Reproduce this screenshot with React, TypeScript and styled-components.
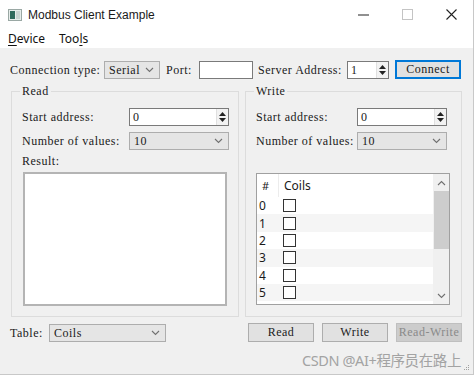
import styled, { createGlobalStyle } from 'styled-components';

const GlobalStyle = createGlobalStyle`
	html, body {
		margin: 0;
		padding: 0;
		background: #f0f0f0;
	}
	* {
		box-sizing: border-box;
	}
`

const ui = '"Noto Sans", "Liberation Sans", sans-serif';
const simsun = '"Liberation Serif", "Noto Sans CJK SC", serif';

const Window = styled.div`
	width: 474px;
	height: 375px;
	position: relative;
	overflow: hidden;
	background: #f0f0f0;
	display: flex;
	flex-direction: column;
	border-right: 1px solid #c8c8c8;
	border-bottom: 1px solid #c8c8c8;
`

const TitleBar = styled.div`
	height: 29px;
	background: #fff;
	display: flex;
	align-items: center;
	padding-left: 8px;
	font-family: "Liberation Sans", sans-serif;
	font-size: 12px;
	color: #1a1a1a;
`

const Title = styled.span`
	margin-left: 6px;
	flex: 1;
`

const Caption = styled.div`
	width: 44px;
	height: 29px;
	display: flex;
	align-items: center;
	justify-content: center;
`

const MenuBar = styled.div`
	height: 19px;
	background: #fff;
	display: flex;
	align-items: center;
	gap: 14px;
	padding-left: 8px;
	font-family: ${ui};
	font-size: 12px;
	color: #111;
`

const MenuItem = styled.span`
	u {
		text-underline-offset: 2px;
	}
`

const Body = styled.div`
	flex: 1;
	display: flex;
	flex-direction: column;
	padding: 12px 11px 0 10px;
	font-family: ${simsun};
	font-size: 12px;
	letter-spacing: 0.5px;
	color: #1a1a1a;
`

const Row = styled.div<{ $gap?: number }>`
	display: flex;
	align-items: center;
	height: 19px;
	gap: ${p => p.$gap ?? 5}px;
`

const Label = styled.span<{ $w?: number }>`
	white-space: nowrap;
	line-height: 14px;
	width: ${p => (p.$w ? `${p.$w}px` : 'auto')};
	flex-shrink: 0;
`

const Input = styled.div<{ $w: number }>`
	width: ${p => p.$w}px;
	height: 18px;
	background: #fff;
	border: 1px solid #7a7a7a;
	display: flex;
	align-items: center;
	padding-left: 3px;
	line-height: 14px;
`

const SpinBox = styled(Input)`
	justify-content: space-between;
`

const SpinButtons = styled.div`
	width: 12px;
	height: 100%;
	display: flex;
	flex-direction: column;
	justify-content: center;
	align-items: center;
	gap: 2px;
	background: #f2f2f2;
	border-left: 1px solid #e0e0e0;
`

const Combo = styled.div<{ $w: number }>`
	width: ${p => p.$w}px;
	height: 18px;
	background: #e5e5e5;
	border: 1px solid #adadad;
	display: flex;
	align-items: center;
	justify-content: space-between;
	padding: 0 5px 0 4px;
	line-height: 14px;
`

const Button = styled.div<{ $focus?: boolean; $disabled?: boolean }>`
	width: 66px;
	height: 19px;
	display: flex;
	align-items: center;
	justify-content: center;
	background: ${p => (p.$disabled ? '#cccccc' : '#e1e1e1')};
	border: 1px solid ${p => (p.$focus ? '#0078d7' : p.$disabled ? '#bfbfbf' : '#adadad')};
	box-shadow: ${p => (p.$focus ? 'inset 0 0 0 1px #0078d7' : 'none')};
	color: ${p => (p.$disabled ? '#8a8a8a' : '#1a1a1a')};
`

const Groups = styled.div`
	display: flex;
	gap: 6px;
	margin-top: 12px;
	padding-left: 1px;
`

const GroupBox = styled.div<{ $w: number }>`
	position: relative;
	width: ${p => p.$w}px;
	height: 226px;
	border: 1px solid #dcdcdc;
	padding: 16px 11px 0 10px;
	display: flex;
	flex-direction: column;
`

const GroupTitle = styled.span`
	position: absolute;
	top: -8px;
	left: 8px;
	padding: 0 2px;
	background: #f0f0f0;
	line-height: 14px;
`

const FormGrid = styled.div<{ $label: number }>`
	display: grid;
	grid-template-columns: ${p => p.$label}px 1fr;
	row-gap: 6px;
	align-items: center;
`

const ResultLabel = styled.div`
	margin-top: 4px;
	height: 14px;
	line-height: 14px;
`

const ResultBox = styled.div`
	margin-top: 4px;
	margin-left: 1px;
	height: 134px;
	background: #fff;
	border: 2px solid #b4b4b4;
`

const Table = styled.div`
	margin-top: 23px;
	height: 132px;
	border: 1px solid #a0a0a0;
	background: #fff;
	display: flex;
	overflow: hidden;
	font-family: ${ui};
	letter-spacing: 0;
	font-size: 12px;
	color: #1a1a1a;
`

const TableBody = styled.div`
	flex: 1;
	display: flex;
	flex-direction: column;
`

const HeaderRow = styled.div`
	height: 23px;
	flex-shrink: 0;
	display: grid;
	grid-template-columns: 22px 1fr;
	align-items: center;
`

const HeaderCell = styled.div<{ $sep?: boolean }>`
	padding-left: 5px;
	height: 100%;
	display: flex;
	align-items: center;
	border-right: ${p => (p.$sep ? '1px solid #ececec' : 'none')};
	font-size: ${p => (p.$sep ? 11 : 12)}px;
`

const DataRow = styled.div<{ $alt: boolean }>`
	height: 17.4px;
	flex-shrink: 0;
	display: grid;
	grid-template-columns: 22px 1fr;
	align-items: center;
	background: ${p => (p.$alt ? '#f5f5f5' : '#fff')};
`

const IndexCell = styled.div`
	padding-left: 2px;
	font-size: 12px;
`

const CheckBox = styled.div`
	width: 13px;
	height: 13px;
	margin-left: 4px;
	border: 1px solid #333;
	background: #fff;
`

const ScrollBar = styled.div`
	width: 16px;
	background: #f0f0f0;
	display: flex;
	flex-direction: column;
	align-items: center;
`

const ScrollArrow = styled.div`
	height: 17px;
	display: flex;
	align-items: center;
	justify-content: center;
`

const Thumb = styled.div`
	width: 15px;
	height: 58px;
	background: #cdcdcd;
`

const Spacer = styled.div`
	flex: 1;
`

const BottomRow = styled(Row)`
	margin-top: 6px;
`

const Watermark = styled.div`
	position: absolute;
	right: 12px;
	bottom: 4px;
	font-family: "Noto Sans", "Noto Sans CJK SC", sans-serif;
	font-size: 14.5px;
	color: #a3a3a3;
	letter-spacing: -0.4px;
`

const Grip = styled.svg`
	position: absolute;
	right: 3px;
	bottom: 3px;
`

function Chevron({ up }: { up?: boolean }) {
	return (
		<svg width="9" height="6" viewBox="0 0 9 6">
			<path
				d={up ? 'M1 5 L4.5 1.5 L8 5' : 'M1 1 L4.5 4.5 L8 1'}
				fill="none"
				stroke="#707070"
				strokeWidth="1.1"
			/>
		</svg>
	);
}

function SpinArrows() {
	return (
		<SpinButtons>
			<svg width="7" height="4" viewBox="0 0 7 4">
				<path d="M0 4 L3.5 0 L7 4 Z" fill="#222" />
			</svg>
			<svg width="7" height="4" viewBox="0 0 7 4">
				<path d="M0 0 L3.5 4 L7 0 Z" fill="#222" />
			</svg>
		</SpinButtons>
	);
}

function AppIcon() {
	return (
		<svg width="14" height="12" viewBox="0 0 14 12">
			<rect x="0.5" y="0.5" width="13" height="11" fill="#e6ecea" stroke="#9aa8a4" />
			<rect x="2" y="2" width="5" height="8" fill="#2f6a5c" />
			<rect x="8" y="2" width="4" height="8" fill="#c9d4d1" />
		</svg>
	);
}

const rows = [0, 1, 2, 3, 4, 5, 6];

export default function App() {
	return (
		<Window>
			<GlobalStyle />
			<TitleBar>
				<AppIcon />
				<Title>Modbus Client Example</Title>
				<Caption>
					<svg width="11" height="2" viewBox="0 0 11 2">
						<rect width="11" height="1" y="0.5" fill="#222" />
					</svg>
				</Caption>
				<Caption>
					<svg width="11" height="11" viewBox="0 0 11 11">
						<rect x="0.5" y="0.5" width="10" height="10" fill="none" stroke="#c4c4c4" />
					</svg>
				</Caption>
				<Caption>
					<svg width="11" height="11" viewBox="0 0 11 11">
						<path d="M0.5 0.5 L10.5 10.5 M10.5 0.5 L0.5 10.5" stroke="#222" strokeWidth="1.1" />
					</svg>
				</Caption>
			</TitleBar>
			<MenuBar>
				<MenuItem><u>D</u>evice</MenuItem>
				<MenuItem>Too<u>l</u>s</MenuItem>
			</MenuBar>
			<Body>
				<Row $gap={0}>
					<Label $w={94}>Connection type:</Label>
					<Combo $w={56}>
						<span>Serial</span>
						<Chevron />
					</Combo>
					<Label $w={39} style={{ paddingLeft: 6 }}>Port:</Label>
					<Input $w={54} />
					<Label $w={94} style={{ paddingLeft: 5 }}>Server Address:</Label>
					<SpinBox $w={42}>
						<span>1</span>
						<SpinArrows />
					</SpinBox>
					<Button $focus style={{ marginLeft: 6 }}>Connect</Button>
				</Row>

				<Groups>
					<GroupBox $w={228}>
						<GroupTitle>Read</GroupTitle>
						<FormGrid $label={107}>
							<Label>Start address:</Label>
							<SpinBox $w={100}>
								<span>0</span>
								<SpinArrows />
							</SpinBox>
							<Label>Number of values:</Label>
							<Combo $w={100}>
								<span>10</span>
								<Chevron />
							</Combo>
						</FormGrid>
						<ResultLabel>Result:</ResultLabel>
						<ResultBox />
					</GroupBox>

					<GroupBox $w={218}>
						<GroupTitle>Write</GroupTitle>
						<FormGrid $label={101}>
							<Label>Start address:</Label>
							<SpinBox $w={90}>
								<span>0</span>
								<SpinArrows />
							</SpinBox>
							<Label>Number of values:</Label>
							<Combo $w={90}>
								<span>10</span>
								<Chevron />
							</Combo>
						</FormGrid>
						<Table>
							<TableBody>
								<HeaderRow>
									<HeaderCell $sep>#</HeaderCell>
									<HeaderCell>Coils</HeaderCell>
								</HeaderRow>
								{rows.map(i => (
									<DataRow key={i} $alt={i % 2 === 1}>
										<IndexCell>{i < 6 ? i : ''}</IndexCell>
										<CheckBox />
									</DataRow>
								))}
							</TableBody>
							<ScrollBar>
								<ScrollArrow>
									<Chevron up />
								</ScrollArrow>
								<Thumb />
								<Spacer />
								<ScrollArrow>
									<Chevron />
								</ScrollArrow>
							</ScrollBar>
						</Table>
					</GroupBox>
				</Groups>

				<BottomRow $gap={8}>
					<Label $w={35} style={{ marginRight: -4 }}>Table:</Label>
					<Combo $w={117}>
						<span>Coils</span>
						<Chevron />
					</Combo>
					<Spacer />
					<Button>Read</Button>
					<Button>Write</Button>
					<Button $disabled>Read-Write</Button>
				</BottomRow>
			</Body>
			<Watermark>CSDN @AI+程序员在路上</Watermark>
			<Grip width="6" height="6" viewBox="0 0 6 6">
				<rect x="4" y="0" width="1" height="1" fill="#a0a0a0" />
				<rect x="2" y="2" width="1" height="1" fill="#a0a0a0" />
				<rect x="4" y="2" width="1" height="1" fill="#a0a0a0" />
				<rect x="0" y="4" width="1" height="1" fill="#a0a0a0" />
				<rect x="2" y="4" width="1" height="1" fill="#a0a0a0" />
				<rect x="4" y="4" width="1" height="1" fill="#a0a0a0" />
			</Grip>
		</Window>
	);
}
